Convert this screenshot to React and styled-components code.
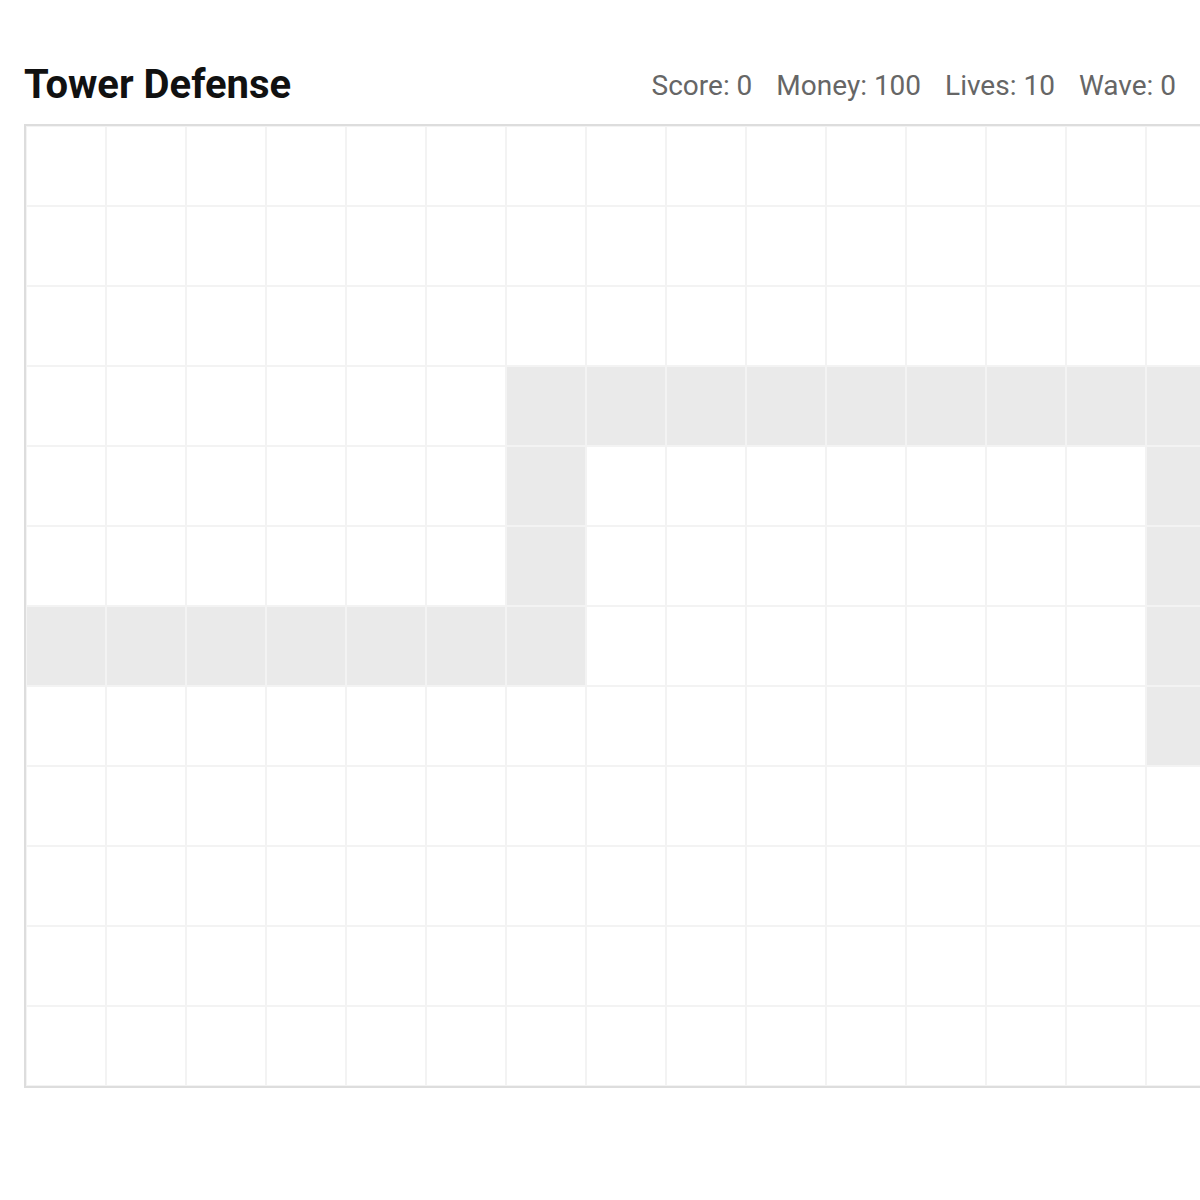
import styled, { createGlobalStyle } from "styled-components";

const COLS = 20;
const ROWS = 12;

const buildPath = () => {
  const cells = new Set();
  const add = (r, c) => cells.add(`${r}-${c}`);
  for (let c = 0; c <= 6; c++) add(6, c);
  for (let r = 3; r <= 6; r++) add(r, 6);
  for (let c = 6; c <= 14; c++) add(3, c);
  for (let r = 3; r <= 7; r++) add(r, 14);
  for (let c = 14; c < COLS; c++) add(7, c);
  return cells;
};

const pathCells = buildPath();

const GlobalStyle = createGlobalStyle`
  body {
    margin: 0;
    background: #ffffff;
    font-family: Roboto, "Noto Sans", sans-serif;
    overflow: hidden;
  }
`;

const Page = styled.div`
  padding: 61px 24px 24px;
  width: 1200px;
  box-sizing: border-box;
`;

const TopBar = styled.header`
  display: flex;
  justify-content: space-between;
  align-items: center;
  margin-bottom: 15px;
`;

const Title = styled.h1`
  margin: 0;
  font-size: 40px;
  font-weight: 700;
  color: #111;
  line-height: 48px;
`;

const Stats = styled.div`
  display: flex;
  gap: 24px;
  font-size: 28px;
  color: #666;
  padding-top: 1px;
`;

const Board = styled.div`
  display: grid;
  grid-template-columns: repeat(${COLS}, 80px);
  grid-template-rows: repeat(${ROWS}, 80px);
  border: 2px solid #dddddd;
  width: max-content;
`;

const Cell = styled.div`
  box-sizing: border-box;
  border: 1px solid #f3f3f3;
  background: ${(p) => (p.$path ? "#eaeaea" : "#ffffff")};
`;

export default function App() {
  const cells = [];
  for (let r = 0; r < ROWS; r++) {
    for (let c = 0; c < COLS; c++) {
      cells.push(<Cell key={`${r}-${c}`} $path={pathCells.has(`${r}-${c}`)} />);
    }
  }

  return (
    <>
      <GlobalStyle />
      <Page>
        <TopBar>
          <Title>Tower Defense</Title>
          <Stats>
            <span>Score: 0</span>
            <span>Money: 100</span>
            <span>Lives: 10</span>
            <span>Wave: 0</span>
          </Stats>
        </TopBar>
        <Board>{cells}</Board>
      </Page>
    </>
  );
}
